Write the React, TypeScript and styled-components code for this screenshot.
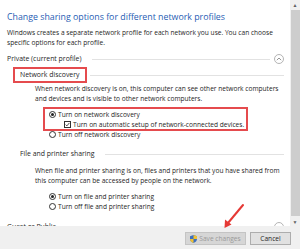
import React from "react";
import styled, { createGlobalStyle } from "styled-components";

const GlobalStyle = createGlobalStyle`
  html, body {
    margin: 0;
    padding: 0;
    background: #ffffff;
  }
  body {
    font-family: "Open Sans", "Noto Sans", "Liberation Sans", sans-serif;
    color: #1e1e1e;
  }
`;

const Window = styled.div`
  position: relative;
  width: 300px;
  height: 249px;
  display: flex;
  flex-direction: column;
  overflow: hidden;
  background: #ffffff;
`;

const Body = styled.div`
  flex: 1;
  display: flex;
  min-height: 0;
`;

const Content = styled.div`
  flex: 1;
  padding: 0 6px 0 7px;
  overflow: hidden;
`;

const Title = styled.h1`
  margin: 10px 0 0;
  font-size: 8.8px;
  font-weight: 400;
  line-height: 15px;
  color: #1f5db3;
  white-space: nowrap;
`;

const Para = styled.p<{ $indent?: number; $top: number }>`
  margin: ${(p) => p.$top}px 0 0 ${(p) => p.$indent ?? 0}px;
  font-size: 6.6px;
  line-height: 9.5px;
  white-space: nowrap;
`;

const SectionRow = styled.div<{ $indent?: number; $top: number }>`
  display: flex;
  align-items: center;
  height: 12px;
  margin: ${(p) => p.$top}px 0 0 ${(p) => p.$indent ?? 0}px;
  font-size: 6.9px;
  white-space: nowrap;
`;

const SectionLabel = styled.span<{ $marked?: boolean }>`
  display: inline-block;
  line-height: 12px;
  padding: 0 5px;
  margin: 0 -5px;
  outline: ${(p) => (p.$marked ? "2px solid #e54b4e" : "none")};
`;

const Rule = styled.div`
  flex: 1;
  height: 1px;
  margin-left: 10px;
  background: #e2e2e2;
`;

const ExpandButton = styled.div`
  width: 10px;
  height: 10px;
  margin-left: 4px;
  border: 1px solid #b4b4b4;
  border-radius: 50%;
  box-sizing: border-box;
  display: flex;
  align-items: center;
  justify-content: center;
  flex: none;
`;

const Options = styled.div<{ $top: number }>`
  margin: ${(p) => p.$top}px 0 0 42px;
`;

const Marked = styled.div`
  width: 201px;
  outline: 2px solid #e54b4e;
  margin-left: -4px;
  padding-left: 4px;
  box-sizing: border-box;
`;

const OptionRow = styled.div<{ $indent?: number }>`
  display: flex;
  align-items: center;
  height: 10px;
  padding-left: ${(p) => p.$indent ?? 0}px;
  font-size: 6.6px;
  white-space: nowrap;
  gap: 2px;
`;

const Radio = styled.span<{ $checked?: boolean }>`
  width: 7px;
  height: 7px;
  border: 1px solid #333;
  border-radius: 50%;
  box-sizing: border-box;
  display: inline-flex;
  align-items: center;
  justify-content: center;
  flex: none;
  &::after {
    content: "";
    width: 3px;
    height: 3px;
    border-radius: 50%;
    background: ${(p) => (p.$checked ? "#222" : "transparent")};
  }
`;

const Check = styled.span`
  width: 7px;
  height: 7px;
  border: 1px solid #333;
  box-sizing: border-box;
  display: inline-flex;
  align-items: center;
  justify-content: center;
  flex: none;
`;

const Scrollbar = styled.div`
  width: 10px;
  display: flex;
  flex-direction: column;
  background: #f0f0f0;
`;

const ScrollArrow = styled.div`
  height: 9px;
  display: flex;
  align-items: center;
  justify-content: center;
  font-size: 5px;
  color: #606060;
`;

const Thumb = styled.div`
  flex: 1;
  background: #cdcdcd;
  margin: 1px 0 1px 1px;
`;

const Footer = styled.div`
  height: 23px;
  flex: none;
  background: #f0f0f0;
  display: flex;
  align-items: center;
  justify-content: flex-end;
  gap: 4px;
  padding-right: 9px;
`;

const Button = styled.button<{ $w: number; $disabled?: boolean }>`
  width: ${(p) => p.$w}px;
  height: 13px;
  padding: 0;
  margin-top: 2px;
  border: 1px solid ${(p) => (p.$disabled ? "#c4c4c4" : "#adadad")};
  background: ${(p) => (p.$disabled ? "#d6d6d6" : "#e1e1e1")};
  color: ${(p) => (p.$disabled ? "#9a9a9a" : "#1e1e1e")};
  font-family: inherit;
  font-size: 6.6px;
  display: flex;
  align-items: center;
  justify-content: center;
  gap: 2px;
  box-sizing: border-box;
`;

const Arrow = styled.svg`
  position: absolute;
  left: 0;
  top: 0;
  pointer-events: none;
`;

function Chevron() {
  return (
    <svg width="6" height="4" viewBox="0 0 6 4">
      <path d="M0.8 3.2 L3 1 L5.2 3.2" fill="none" stroke="#8a8a8a" strokeWidth="0.9" />
    </svg>
  );
}

function Shield() {
  return (
    <svg width="7" height="8" viewBox="0 0 7 8">
      <path d="M3.5 0 L7 1.2 V4 C7 6 5.5 7.3 3.5 8 C1.5 7.3 0 6 0 4 V1.2 Z" fill="#3b6fc1" />
      <path d="M3.5 0 L7 1.2 V4 H3.5 Z" fill="#f2c230" />
      <path d="M0 4 H3.5 V8 C1.5 7.3 0 6 0 4 Z" fill="#f2c230" />
    </svg>
  );
}

export default function App() {
  return (
    <>
      <GlobalStyle />
      <Window>
        <Body>
          <Content>
            <Title>Change sharing options for different network profiles</Title>
            <Para $top={3}>
              Windows creates a separate network profile for each network you use. You can choose
              <br />
              specific options for each profile.
            </Para>

            <SectionRow $top={6}>
              <SectionLabel>Private (current profile)</SectionLabel>
              <Rule />
              <ExpandButton>
                <Chevron />
              </ExpandButton>
            </SectionRow>

            <SectionRow $top={4} $indent={13}>
              <SectionLabel $marked>Network discovery</SectionLabel>
              <Rule />
            </SectionRow>

            <Para $top={3} $indent={28}>
              When network discovery is on, this computer can see other network computers
              <br />
              and devices and is visible to other network computers.
            </Para>

            <Options $top={6}>
              <Marked>
                <OptionRow>
                  <Radio $checked />
                  Turn on network discovery
                </OptionRow>
                <OptionRow $indent={15}>
                  <Check>
                    <svg width="5" height="5" viewBox="0 0 5 5">
                      <path d="M0.6 2.6 L1.9 3.9 L4.4 0.9" fill="none" stroke="#222" strokeWidth="0.8" />
                    </svg>
                  </Check>
                  Turn on automatic setup of network-connected devices.
                </OptionRow>
              </Marked>
              <OptionRow>
                <Radio />
                Turn off network discovery
              </OptionRow>
            </Options>

            <SectionRow $top={9} $indent={13}>
              <SectionLabel>File and printer sharing</SectionLabel>
              <Rule />
            </SectionRow>

            <Para $top={6} $indent={28}>
              When file and printer sharing is on, files and printers that you have shared from
              <br />
              this computer can be accessed by people on the network.
            </Para>

            <Options $top={6}>
              <OptionRow>
                <Radio $checked />
                Turn on file and printer sharing
              </OptionRow>
              <OptionRow>
                <Radio />
                Turn off file and printer sharing
              </OptionRow>
            </Options>

            <SectionRow $top={10}>
              <SectionLabel>Guest or Public</SectionLabel>
              <Rule />
              <ExpandButton>
                <Chevron />
              </ExpandButton>
            </SectionRow>
          </Content>
          <Scrollbar>
            <ScrollArrow>▲</ScrollArrow>
            <Thumb />
            <ScrollArrow>▼</ScrollArrow>
          </Scrollbar>
        </Body>
        <Footer>
          <Button $w={61} $disabled disabled>
            <Shield />
            Save changes
          </Button>
          <Button $w={41}>Cancel</Button>
        </Footer>
        <Arrow width="300" height="249" viewBox="0 0 300 249">
          <line x1="243" y1="205" x2="228" y2="223" stroke="#e53935" strokeWidth="2" strokeLinecap="round" />
          <path d="M224.5 228 L225 219.5 L231.5 224.5 Z" fill="#e53935" />
        </Arrow>
      </Window>
    </>
  );
}
